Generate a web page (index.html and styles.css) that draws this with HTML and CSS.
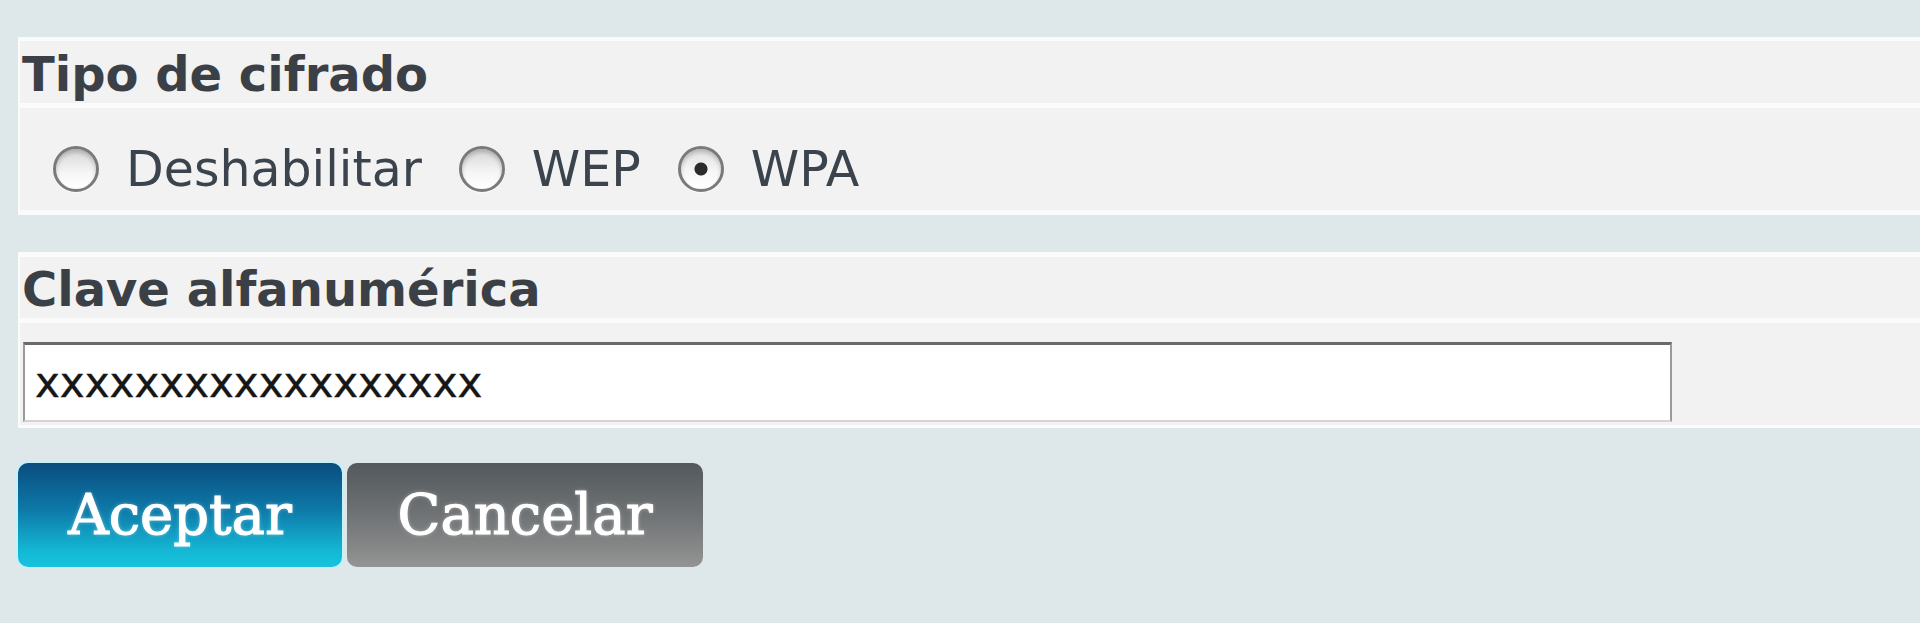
FILE: index.html
```html
<!DOCTYPE html>
<html lang="es">
<head>
<meta charset="utf-8">
<title>Cifrado</title>
<link rel="stylesheet" href="styles.css">
</head>
<body>
<main class="page">
  <section class="panel">
    <h2 class="panel-title">Tipo de cifrado</h2>
    <div class="panel-body radio-row">
      <label class="opt"><input type="radio" name="cifrado" class="radio"><span>Deshabilitar</span></label>
      <label class="opt"><input type="radio" name="cifrado" class="radio"><span>WEP</span></label>
      <label class="opt"><input type="radio" name="cifrado" class="radio" checked><span>WPA</span></label>
    </div>
  </section>

  <section class="panel panel-key">
    <h2 class="panel-title">Clave alfanumérica</h2>
    <div class="panel-body input-row">
      <input type="text" class="text-input" value="xxxxxxxxxxxxxxxxxx">
    </div>
  </section>

  <div class="actions">
    <button class="btn btn-ok">Aceptar</button>
    <button class="btn btn-cancel">Cancelar</button>
  </div>
</main>
</body>
</html>
```

FILE: styles.css
```css
html, body {
  margin: 0;
  padding: 0;
  background: #dee7e9;
}

.page {
  padding: 37px 0 0 18px;
  display: flex;
  flex-direction: column;
}

.panel {
  background: #f1f2f1;
  border-top: 4px solid #fafbfb;
  border-left: 2px solid #fafbfb;
  border-bottom: 5px solid #fafbfb;
  display: flex;
  flex-direction: column;
}

.panel-key {
  margin-top: 37px;
  border-top-width: 5px;
  border-bottom-width: 3px;
}

.panel-title {
  margin: 0;
  height: 67px;
  box-sizing: border-box;
  padding: 5px 0 0 2px;
  font-family: "DejaVu Sans", Verdana, sans-serif;
  font-weight: bold;
  font-size: 48px;
  line-height: 56px;
  color: #3b4047;
  border-bottom: 5px solid #fafbfb;
}

.panel-key .panel-title {
  height: 66px;
  padding-top: 4px;
}

.radio-row {
  height: 102px;
  box-sizing: border-box;
  padding: 20px 0 0 33px;
  display: flex;
  align-items: center;
  gap: 37px;
}

.opt {
  display: flex;
  align-items: center;
  gap: 27px;
  font-family: "DejaVu Sans", Verdana, sans-serif;
  font-size: 49px;
  color: #3b434c;
}

.radio {
  appearance: none;
  -webkit-appearance: none;
  margin: 0;
  width: 46px;
  height: 46px;
  box-sizing: border-box;
  border-radius: 50%;
  border: 3px solid #7a7a7a;
  background: linear-gradient(#d6d6d6, #f6f6f6 60%, #ffffff);
  box-shadow: inset 0 3px 4px rgba(0, 0, 0, 0.2), 0 1px 1px rgba(255, 255, 255, 0.8);
}

.radio:checked {
  background: radial-gradient(circle, #2b2b2b 0 6px, transparent 7px), linear-gradient(#e0e0e0, #f8f8f8 60%, #ffffff);
}

.input-row {
  height: 102px;
  box-sizing: border-box;
  padding: 19px 0 3px 3px;
  display: flex;
}

.text-input {
  width: 1649px;
  height: 80px;
  box-sizing: border-box;
  margin: 0;
  padding: 0 10px;
  border-style: solid;
  border-width: 3px 2px 2px 2px;
  border-color: #6a6a6a #9a9a9a #d4d4d4 #9a9a9a;
  background: #ffffff;
  font-family: "DejaVu Sans", Verdana, sans-serif;
  font-size: 42px;
  color: #161616;
  -webkit-text-stroke: 0.4px #161616;
  outline: none;
}

.actions {
  margin-top: 35px;
  display: flex;
  gap: 5px;
}

.btn {
  height: 104px;
  box-sizing: border-box;
  border: none;
  border-radius: 10px;
  padding: 0;
  font-family: "DejaVu Serif", "Liberation Serif", serif;
  font-weight: normal;
  font-size: 56px;
  line-height: 104px;
  color: #ffffff;
  -webkit-text-stroke: 1.2px #ffffff;
  text-shadow: 0 0 4px rgba(255, 255, 255, 0.45);
  text-align: center;
  cursor: pointer;
}

.btn-ok {
  width: 324px;
  background: linear-gradient(#0a4d7f 0%, #0d79a8 45%, #14b8d5 85%, #17c4dc 100%);
  box-shadow: 0 0 0 2px #c4f2fa;
}

.btn-cancel {
  width: 356px;
  background: linear-gradient(#53595d 0%, #6c7072 45%, #8c8d8d 90%, #939393 100%);
}
```
